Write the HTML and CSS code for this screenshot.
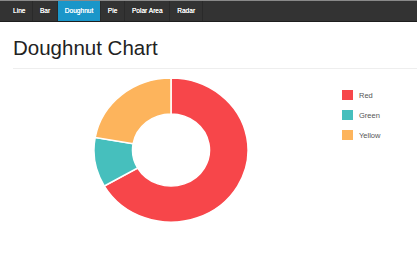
FILE: index.html
```html
<!DOCTYPE html>
<html>
<head>
<meta charset="utf-8">
<link rel="stylesheet" href="styles.css">
</head>
<body>
<nav class="navbar">
  <ul class="nav">
    <li class="nav-item">Line</li>
    <li class="nav-item">Bar</li>
    <li class="nav-item active">Doughnut</li>
    <li class="nav-item">Pie</li>
    <li class="nav-item">Polar Area</li>
    <li class="nav-item">Radar</li>
  </ul>
</nav>
<main class="content">
  <h1 class="title">Doughnut Chart</h1>
  <div class="rule"></div>
  <div class="chart-row">
    <svg class="doughnut" width="156" height="146" viewBox="-78 -78 156 156" preserveAspectRatio="none">
      <path class="seg" fill="#F7464A" d="M0,-77 A77,77 0 1 1 -66.68,38.5 L-33.34,19.25 A38.5,38.5 0 1 0 0,-38.5 Z"/>
      <path class="seg" fill="#46BFBD" d="M-66.68,38.5 A77,77 0 0 1 -75.83,-13.37 L-37.91,-6.68 A38.5,38.5 0 0 0 -33.34,19.25 Z"/>
      <path class="seg" fill="#FDB45C" d="M-75.83,-13.37 A77,77 0 0 1 0,-77 L0,-38.5 A38.5,38.5 0 0 0 -37.91,-6.68 Z"/>
    </svg>
    <ul class="legend">
      <li class="legend-item"><span class="swatch red"></span>Red</li>
      <li class="legend-item"><span class="swatch green"></span>Green</li>
      <li class="legend-item"><span class="swatch yellow"></span>Yellow</li>
    </ul>
  </div>
</main>
</body>
</html>
```
FILE: styles.css
```css
html, body {
  margin: 0;
  padding: 0;
  background: #fff;
}
body {
  font-family: "Liberation Sans", Arial, sans-serif;
  color: #222;
}
.navbar {
  background: #333;
  border-top: 1px solid #8a8a8a;
  border-bottom: 1px solid #1e1e1e;
  height: 20px;
}
.nav {
  list-style: none;
  margin: 0;
  padding: 0 0 0 6px;
  display: flex;
  height: 20px;
}
.nav-item {
  padding: 0 6.5px 0 7px;
  font-size: 6.6px;
  font-weight: normal;
  color: #fff;
  line-height: 20px;
  border-right: 1px solid #2a2a2a;
  text-shadow: 0 0 0.4px #fff;
}
.nav-item.active {
  background: #1a96c9;
}
.content {
  padding: 0 0 0 13px;
}
.title {
  margin: 0;
  padding-top: 14px;
  font-size: 20.5px;
  font-weight: normal;
  line-height: 24px;
  color: #222;
}
.rule {
  margin-top: 8px;
  height: 1px;
  background: #eeeeee;
}
.chart-row {
  display: flex;
  align-items: flex-start;
}
.doughnut {
  display: block;
  margin-left: 80px;
  margin-top: 8px;
}
.seg {
  stroke: #fff;
  stroke-width: 1.5px;
  vector-effect: non-scaling-stroke;
}
.legend {
  list-style: none;
  margin: 21px 0 0 93px;
  padding: 0;
  display: flex;
  flex-direction: column;
  gap: 10px;
}
.legend-item {
  display: flex;
  align-items: center;
  gap: 6px;
  height: 10px;
  font-size: 7.5px;
  color: #555;
}
.swatch {
  width: 11px;
  height: 10px;
  display: block;
}
.swatch.red { background: #F7464A; }
.swatch.green { background: #46BFBD; }
.swatch.yellow { background: #FDB45C; }
```
